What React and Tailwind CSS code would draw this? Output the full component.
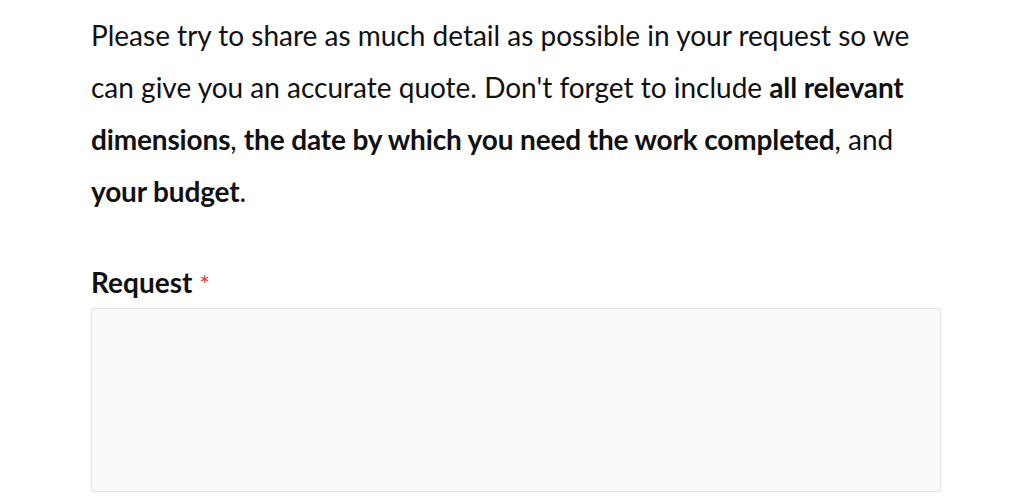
import React from "react";

const App = () => {
  return (
    <div className="min-h-screen bg-white font-['Lato',sans-serif] text-[#111]">
      <div className="w-[850px] ml-[91px] pt-[9px]">
        <p className="text-[28px] leading-[52px]">
          Please try to share as much detail as possible in your request so we
          can give you an accurate quote. Don't forget to include{" "}
          <strong className="font-bold tracking-[-0.15px]">
            all relevant dimensions
          </strong>
          ,{" "}
          <strong className="font-bold tracking-[-0.15px]">
            the date by which you need the work completed
          </strong>
          , and{" "}
          <strong className="font-bold tracking-[-0.15px]">your budget</strong>.
        </p>

        <form className="mt-[47px]">
          <label
            htmlFor="request"
            className="block text-[28px] leading-[36px] font-bold"
          >
            Request{" "}
            <span className="text-[#f0383b] font-normal text-[25px] leading-none relative top-[1px]">
              *
            </span>
          </label>
          <textarea
            id="request"
            required
            className="mt-[8px] block w-full h-[184px] bg-[#fafafa] border border-[#e2e2e2] rounded-[3px] resize-none focus:outline-none"
          />
        </form>
      </div>
    </div>
  );
};

export default App;
